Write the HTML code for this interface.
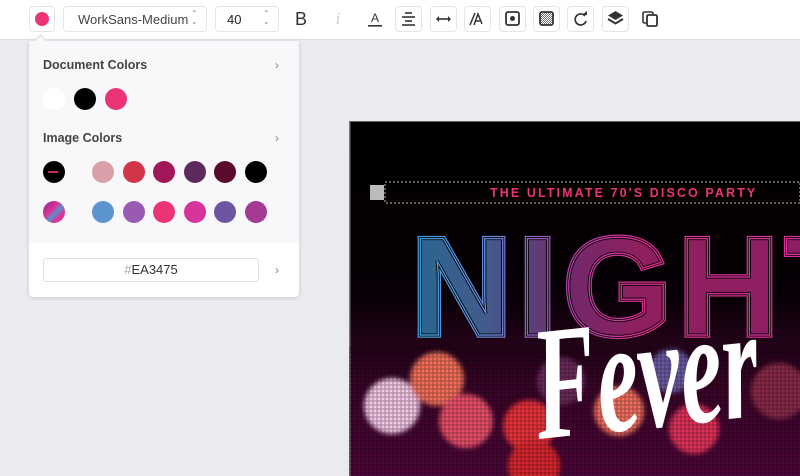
<!DOCTYPE html>
<html><head><meta charset="utf-8">
<style>
*{box-sizing:border-box;margin:0;padding:0}
body{width:800px;height:476px;overflow:hidden;background:#e9ebee;font-family:"Liberation Sans",sans-serif;position:relative}
.tb{position:absolute;left:0;top:0;width:800px;height:40px;background:#fff;border-bottom:1px solid #dcdfe3}
.btn{position:absolute;top:6px;height:26px;border:1px solid #e3e5e8;border-radius:4px;background:#fff}
.ic{position:absolute;top:6px;width:26px;height:26px;display:flex;align-items:center;justify-content:center}
.panel{position:absolute;left:29px;top:41px;width:270px;height:256px;background:#f8f8fa;border-radius:0 0 4px 4px;box-shadow:0 1px 4px rgba(0,0,0,.15);overflow:hidden}
.panel .bot{position:absolute;left:0;top:202px;width:270px;height:54px;background:#fff}
.h{position:absolute;left:14px;font-size:12.5px;font-weight:bold;color:#444}
.chev{position:absolute;left:246px;font-size:12px;color:#888}
.sw{position:absolute;width:22px;height:22px;border-radius:50%}
</style></head><body>
<div class="tb">
  <div class="btn" style="left:29px;width:26px;"><div style="position:absolute;left:5px;top:5px;width:14px;height:14px;border-radius:50%;background:#ea3475"></div></div>
  <div class="btn" style="left:63px;width:144px;"><span style="position:absolute;left:14px;top:5px;font-size:13px;color:#444">WorkSans-Medium</span><span style="position:absolute;left:127px;top:3px;font-size:8px;color:#888;line-height:8px">⌃<br>⌄</span></div>
  <div class="btn" style="left:215px;width:64px;"><span style="position:absolute;left:11px;top:5px;font-size:13px;color:#222">40</span><span style="position:absolute;left:47px;top:3px;font-size:8px;color:#888;line-height:8px">⌃<br>⌄</span></div>
  <div class="ic" style="left:288px;font-size:18px;color:#333">B</div>
  <div class="ic" style="left:325px;font-size:17px;color:#ccc;font-style:italic;font-family:'Liberation Serif',serif">i</div>
  <div class="ic" style="left:362px;"><svg width="18" height="18"><text x="9" y="12" font-size="12" text-anchor="middle" fill="#333" font-family="Liberation Sans">A</text><rect x="2" y="15" width="14" height="1.6" fill="#333"/></svg></div>
  <div class="btn" style="left:395px;width:27px"><svg width="25" height="24"><g stroke="#333" stroke-width="1.6"><line x1="9" y1="6" x2="16" y2="6"/><line x1="6" y1="10" x2="19" y2="10"/><line x1="9" y1="14" x2="16" y2="14"/><line x1="6" y1="18" x2="19" y2="18"/></g></svg></div>
  <div class="btn" style="left:430px;width:27px"><svg width="25" height="24"><line x1="6" y1="12" x2="19" y2="12" stroke="#333" stroke-width="1.6"/><path d="M5 12l3-3v6zM20 12l-3-3v6z" fill="#333"/></svg></div>
  <div class="btn" style="left:464px;width:27px"><svg width="25" height="24"><path d="M5 18L10 6M9 18L13 7l4 10M11 14h5" stroke="#333" stroke-width="1.5" fill="none"/></svg></div>
  <div class="btn" style="left:499px;width:27px"><svg width="25" height="24"><rect x="6" y="5" width="13" height="13" rx="2" stroke="#333" stroke-width="1.8" fill="none"/><circle cx="12.5" cy="11.5" r="2.5" fill="#333"/></svg></div>
  <div class="btn" style="left:533px;width:27px"><svg width="25" height="24"><defs><pattern id="ck" width="2" height="2" patternUnits="userSpaceOnUse"><rect width="1" height="1" fill="#777"/><rect x="1" y="1" width="1" height="1" fill="#777"/></pattern></defs><rect x="6" y="5" width="13" height="13" rx="2" fill="url(#ck)" stroke="#333" stroke-width="1.8"/></svg></div>
  <div class="btn" style="left:567px;width:27px"><svg width="25" height="24"><path d="M17 9A5.5 5.5 0 1 0 18 14" stroke="#333" stroke-width="1.7" fill="none"/><path d="M14 8h5v-4z" fill="#333"/></svg></div>
  <div class="btn" style="left:602px;width:27px"><svg width="25" height="24"><path d="M12.5 4L20 8.5 12.5 13 5 8.5z" fill="#333"/><path d="M5 12l7.5 4.5L20 12" stroke="#333" stroke-width="2" fill="none"/></svg></div>
  <div class="ic" style="left:637px"><svg width="20" height="20"><rect x="3" y="3" width="10" height="11" rx="1.5" fill="none" stroke="#333" stroke-width="1.6"/><rect x="7" y="6" width="10" height="11" rx="1.5" fill="#fff" stroke="#333" stroke-width="1.8"/></svg></div>
</div>
<div style="position:absolute;left:36px;top:36px;width:9px;height:9px;background:#f8f8fa;transform:rotate(45deg);border-left:1px solid #dcdfe3;border-top:1px solid #dcdfe3;z-index:3"></div>
<div class="panel">
  <div class="h" style="top:17px">Document Colors</div><div class="chev" style="top:17px">›</div>
  <div class="sw" style="left:14px;top:47px;background:#fff"></div>
  <div class="sw" style="left:45px;top:47px;background:#000"></div>
  <div class="sw" style="left:76px;top:47px;background:#ea3475"></div>
  <div class="h" style="top:90px">Image Colors</div><div class="chev" style="top:90px">›</div>
  <div class="sw" style="left:14px;top:120px;background:#000"><div style="position:absolute;left:5px;top:10px;width:10px;height:2px;background:#c03060"></div></div>
  <div class="sw" style="left:63px;top:120px;background:#d9a0a9"></div>
  <div class="sw" style="left:94px;top:120px;background:#d2354a"></div>
  <div class="sw" style="left:124px;top:120px;background:#a0185a"></div>
  <div class="sw" style="left:155px;top:120px;background:#5e2a5c"></div>
  <div class="sw" style="left:185px;top:120px;background:#5a0a2c"></div>
  <div class="sw" style="left:216px;top:120px;background:#000"></div>
  <div class="sw" style="left:14px;top:160px;background:linear-gradient(135deg,#7a2a9a 0%,#e03090 40%,#5a8fd0 55%,#e03090 75%)"></div>
  <div class="sw" style="left:63px;top:160px;background:#5b94cf"></div>
  <div class="sw" style="left:94px;top:160px;background:#9a5ab4"></div>
  <div class="sw" style="left:124px;top:160px;background:#ea3475"></div>
  <div class="sw" style="left:155px;top:160px;background:#d8339a"></div>
  <div class="sw" style="left:185px;top:160px;background:#6e55a3"></div>
  <div class="sw" style="left:216px;top:160px;background:#a43a94"></div>
  <div class="bot"></div>
  <div style="position:absolute;left:14px;top:217px;width:216px;height:24px;border:1px solid #dfe1e4;border-radius:3px;background:#fff;text-align:center;font-size:13px;line-height:22px;color:#333"><span style="color:#aaa">#</span>EA3475</div>
  <div class="chev" style="top:222px">›</div>
</div>
<svg style="position:absolute;left:349px;top:121px" width="451" height="355" viewBox="0 0 451 355">
  <defs>
    <linearGradient id="g" x1="64" y1="0" x2="451" y2="0" gradientUnits="userSpaceOnUse">
      <stop offset="0" stop-color="#3fa0df"/><stop offset="0.2" stop-color="#6a8ad8"/><stop offset="0.4" stop-color="#b040a8"/><stop offset="0.6" stop-color="#e03090"/><stop offset="1" stop-color="#d8309a"/>
    </linearGradient>
    <linearGradient id="bg" x1="0" y1="0" x2="0" y2="1">
      <stop offset="0" stop-color="#000"/><stop offset="0.5" stop-color="#080006"/><stop offset="0.75" stop-color="#3a0428"/><stop offset="1" stop-color="#50063a"/>
    </linearGradient>
    <pattern id="grid" width="4" height="4" patternUnits="userSpaceOnUse"><rect width="4" height="4" fill="none" stroke="rgba(0,0,0,.35)" stroke-width="1"/></pattern>
    <filter id="bl"><feGaussianBlur stdDeviation="2.5"/></filter>
    <clipPath id="lc"><rect x="0" y="225" width="451" height="130"/></clipPath>
  </defs>
  <rect width="451" height="355" fill="url(#bg)"/>
  <rect x="0" y="0" width="1.5" height="355" fill="#777"/>
  <rect x="0" y="0" width="451" height="1" fill="#666"/>
  <g filter="url(#bl)">
    <circle cx="43" cy="285" r="28" fill="#f4c8e8"/>
    <circle cx="88" cy="258" r="27" fill="#f2705a"/>
    <circle cx="117" cy="300" r="27" fill="#e8506a"/>
    <circle cx="180" cy="305" r="26" fill="#e8303a"/>
    <circle cx="185" cy="345" r="26" fill="#d8282e"/>
    <circle cx="212" cy="260" r="24" fill="#6a2a5a"/>
    <circle cx="270" cy="290" r="25" fill="#f07060"/>
    <circle cx="345" cy="308" r="25" fill="#e0305a"/>
    <circle cx="322" cy="250" r="22" fill="#6a5aa0"/>
    <circle cx="430" cy="270" r="28" fill="#8a2a48"/>
  </g>
  <rect x="0" y="225" width="451" height="130" fill="url(#grid)" clip-path="url(#lc)"/>
  <rect x="36" y="61" width="415" height="21" fill="none" stroke="#bbb" stroke-width="1" stroke-dasharray="2,2"/>
  <rect x="21" y="64" width="14" height="15" fill="#bbb"/>
  <text x="141" y="76" font-family="Liberation Sans" font-weight="bold" font-size="12.5" letter-spacing="2.1" fill="#ea3475">THE ULTIMATE 70'S DISCO PARTY</text>
  <g font-family="Liberation Sans" font-weight="bold" font-size="140" letter-spacing="6" stroke-linejoin="miter">
    <text x="62" y="214" fill="url(#g)" stroke="url(#g)" stroke-width="5.5">NIGHT</text>
    <text x="62" y="214" fill="none" stroke="#000" stroke-width="3">NIGHT</text>
    <text x="62" y="214" fill="none" stroke="url(#g)" stroke-width="1.2">NIGHT</text>
    <text x="62" y="214" fill="#000" opacity="0.35">NIGHT</text>
    <text x="62" y="214" fill="none" stroke="url(#g)" stroke-width="1.2">NIGHT</text>
  </g>
  <text x="0" y="0" transform="translate(190 318) rotate(-6) scale(0.7 1.2)" font-family="Liberation Serif" font-style="italic" font-weight="bold" font-size="135" fill="#fff">Fever</text>
</svg>
</body></html>
